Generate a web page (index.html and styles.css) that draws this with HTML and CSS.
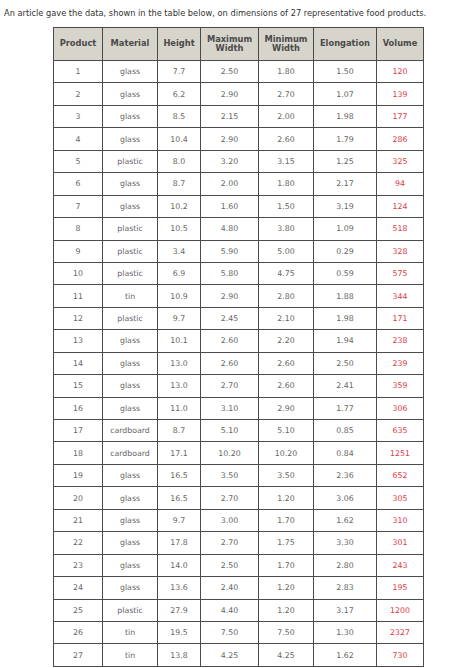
FILE: index.html
```html
<!DOCTYPE html>
<html>
<head>
<meta charset="utf-8">
<link rel="stylesheet" href="styles.css">
</head>
<body>
<p class="intro">An article gave the data, shown in the table below, on dimensions of 27 representative food products.</p>
<table class="data">
<colgroup>
<col class="c1"><col class="c2"><col class="c3"><col class="c4"><col class="c5"><col class="c6"><col class="c7">
</colgroup>
<thead>
<tr><th>Product</th><th>Material</th><th>Height</th><th>Maximum<br>Width</th><th>Minimum<br>Width</th><th>Elongation</th><th>Volume</th></tr>
</thead>
<tbody>
<tr><td>1</td><td>glass</td><td>7.7</td><td>2.50</td><td>1.80</td><td>1.50</td><td class="vol">120</td></tr>
<tr><td>2</td><td>glass</td><td>6.2</td><td>2.90</td><td>2.70</td><td>1.07</td><td class="vol">139</td></tr>
<tr><td>3</td><td>glass</td><td>8.5</td><td>2.15</td><td>2.00</td><td>1.98</td><td class="vol">177</td></tr>
<tr><td>4</td><td>glass</td><td>10.4</td><td>2.90</td><td>2.60</td><td>1.79</td><td class="vol">286</td></tr>
<tr><td>5</td><td>plastic</td><td>8.0</td><td>3.20</td><td>3.15</td><td>1.25</td><td class="vol">325</td></tr>
<tr><td>6</td><td>glass</td><td>8.7</td><td>2.00</td><td>1.80</td><td>2.17</td><td class="vol">94</td></tr>
<tr><td>7</td><td>glass</td><td>10.2</td><td>1.60</td><td>1.50</td><td>3.19</td><td class="vol">124</td></tr>
<tr><td>8</td><td>plastic</td><td>10.5</td><td>4.80</td><td>3.80</td><td>1.09</td><td class="vol">518</td></tr>
<tr><td>9</td><td>plastic</td><td>3.4</td><td>5.90</td><td>5.00</td><td>0.29</td><td class="vol">328</td></tr>
<tr><td>10</td><td>plastic</td><td>6.9</td><td>5.80</td><td>4.75</td><td>0.59</td><td class="vol">575</td></tr>
<tr><td>11</td><td>tin</td><td>10.9</td><td>2.90</td><td>2.80</td><td>1.88</td><td class="vol">344</td></tr>
<tr><td>12</td><td>plastic</td><td>9.7</td><td>2.45</td><td>2.10</td><td>1.98</td><td class="vol">171</td></tr>
<tr><td>13</td><td>glass</td><td>10.1</td><td>2.60</td><td>2.20</td><td>1.94</td><td class="vol">238</td></tr>
<tr><td>14</td><td>glass</td><td>13.0</td><td>2.60</td><td>2.60</td><td>2.50</td><td class="vol">239</td></tr>
<tr><td>15</td><td>glass</td><td>13.0</td><td>2.70</td><td>2.60</td><td>2.41</td><td class="vol">359</td></tr>
<tr><td>16</td><td>glass</td><td>11.0</td><td>3.10</td><td>2.90</td><td>1.77</td><td class="vol">306</td></tr>
<tr><td>17</td><td>cardboard</td><td>8.7</td><td>5.10</td><td>5.10</td><td>0.85</td><td class="vol">635</td></tr>
<tr><td>18</td><td>cardboard</td><td>17.1</td><td>10.20</td><td>10.20</td><td>0.84</td><td class="vol">1251</td></tr>
<tr><td>19</td><td>glass</td><td>16.5</td><td>3.50</td><td>3.50</td><td>2.36</td><td class="vol">652</td></tr>
<tr><td>20</td><td>glass</td><td>16.5</td><td>2.70</td><td>1.20</td><td>3.06</td><td class="vol">305</td></tr>
<tr><td>21</td><td>glass</td><td>9.7</td><td>3.00</td><td>1.70</td><td>1.62</td><td class="vol">310</td></tr>
<tr><td>22</td><td>glass</td><td>17.8</td><td>2.70</td><td>1.75</td><td>3.30</td><td class="vol">301</td></tr>
<tr><td>23</td><td>glass</td><td>14.0</td><td>2.50</td><td>1.70</td><td>2.80</td><td class="vol">243</td></tr>
<tr><td>24</td><td>glass</td><td>13.6</td><td>2.40</td><td>1.20</td><td>2.83</td><td class="vol">195</td></tr>
<tr><td>25</td><td>plastic</td><td>27.9</td><td>4.40</td><td>1.20</td><td>3.17</td><td class="vol">1200</td></tr>
<tr><td>26</td><td>tin</td><td>19.5</td><td>7.50</td><td>7.50</td><td>1.30</td><td class="vol">2327</td></tr>
<tr><td>27</td><td>tin</td><td>13.8</td><td>4.25</td><td>4.25</td><td>1.62</td><td class="vol">730</td></tr>
</tbody>
</table>
</body>
</html>
```
FILE: styles.css
```css
html, body {
  margin: 0;
  padding: 0;
  background: #ffffff;
}
body {
  font-family: "DejaVu Sans", Verdana, sans-serif;
  color: #444;
}
.intro {
  margin: 0;
  padding: 8px 0 0 4px;
  height: 19px;
  font-size: 8.25px;
  line-height: 10px;
  color: #333;
}
.data {
  margin-left: 53px;
  border-collapse: collapse;
  table-layout: fixed;
  width: 370px;
}
.c1 { width: 49px; }
.c2 { width: 55px; }
.c3 { width: 43px; }
.c4 { width: 58px; }
.c5 { width: 55px; }
.c6 { width: 63px; }
.c7 { width: 47px; }
.data th, .data td {
  border: 1px solid #4a4a4a;
  text-align: center;
  padding: 0;
}
.data th {
  background: #d7d4cb;
  height: 32px;
  font-size: 8.3px;
  line-height: 9.5px;
  font-weight: bold;
  color: #4a4a4a;
}
.data td {
  height: 21.44px;
  font-size: 7.8px;
  color: #666;
}
.data td.vol {
  color: #e03844;
}
```
